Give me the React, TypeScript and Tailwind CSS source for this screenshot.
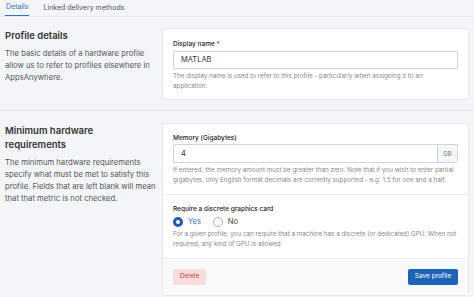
export default function App() {
  return (
    <div className="h-[297px] w-[474px] overflow-hidden bg-[#f3f5f8] font-['Inter',sans-serif] text-[#333]">
      <div className="flex h-[17px] items-end gap-[14px] border-b border-[#e4e8ee] px-[5px] text-[7px]">
        <div className="border-b-[1.5px] border-[#2f74c0] px-[1px] pb-[3px] text-[#2f74c0]">Details</div>
        <div className="pb-[3px] text-[#555]">Linked delivery methods</div>
      </div>

      <div className="flex gap-[5px] px-[5px] pt-[11px] pb-[10px]">
        <div className="w-[152px] shrink-0">
          <div className="pt-[1px] text-[9.5px] font-semibold leading-[14px] text-[#333]">Profile details</div>
          <p className="mt-[5px] text-[7.7px] leading-[12px] text-[#555]">
            The basic details of a hardware profile allow us to refer to profiles elsewhere in AppsAnywhere.
          </p>
        </div>
        <div className="h-[72px] flex-1 rounded-[3px] border border-[#e6e9ee] bg-white px-[10px] pt-[11px]">
          <div className="text-[6.5px] font-medium leading-[9px] text-[#222]">
            Display name <span className="text-[#c0392b]">*</span>
          </div>
          <div className="mt-[2px] flex h-[18px] items-center rounded-[2px] border border-[#cfd4da] px-[7px] text-[7.5px] text-[#333]">
            MATLAB
          </div>
          <p className="mt-[2px] max-w-[262px] text-[6.3px] leading-[10px] text-[#888]">
            The display name is used to refer to this profile - particularly when assigning it to an application.
          </p>
        </div>
      </div>

      <div className="h-[1px] bg-[#e3e7ed]" />

      <div className="flex gap-[5px] px-[5px] pt-[12px]">
        <div className="w-[152px] shrink-0">
          <div className="max-w-[130px] pt-[1px] text-[9.5px] font-semibold leading-[14px] text-[#333]">
            Minimum hardware requirements
          </div>
          <p className="mt-[5px] text-[7.7px] leading-[12px] text-[#555]">
            The minimum hardware requirements specify what must be met to satisfy this profile. Fields that are left blank will mean that that metric is not checked.
          </p>
        </div>
        <div className="flex-1 overflow-hidden rounded-[3px] border border-[#e6e9ee] bg-white">
          <div className="border-b border-[#eceff3] px-[10px] pt-[10px] pb-[9px]">
            <div className="text-[6.5px] font-medium leading-[9px] text-[#222]">Memory (Gigabytes)</div>
            <div className="mt-[1px] flex h-[19px] rounded-[2px] border border-[#cfd4da] text-[7.5px]">
              <div className="flex flex-1 items-center px-[7px] text-[#333]">4</div>
              <div className="flex w-[20px] items-center justify-center border-l border-[#cfd4da] bg-[#f5f6f8] text-[6px] text-[#777]">
                GB
              </div>
            </div>
            <p className="mt-[2px] text-[6.3px] leading-[10px] text-[#888]">
              If entered, the memory amount must be greater than zero. Note that if you wish to enter partial gigabytes, only English format decimals are currently supported - e.g. 1.5 for one and a half.
            </p>
          </div>
          <div className="border-b border-[#eceff3] px-[10px] pt-[10px] pb-[9px]">
            <div className="text-[6.5px] font-medium leading-[9px] text-[#222]">Require a discrete graphics card</div>
            <div className="mt-[2px] flex h-[12px] items-center text-[7.5px]">
              <span className="h-[10px] w-[10px] rounded-full border-[3px] border-[#1d5fae] bg-white" />
              <span className="ml-[5px] text-[#2f74c0]">Yes</span>
              <span className="ml-[12px] h-[10px] w-[10px] rounded-full border border-[#aab1ba] bg-white" />
              <span className="ml-[5px] text-[#444]">No</span>
            </div>
            <p className="mt-[1px] text-[6.3px] leading-[10px] text-[#888]">
              For a given profile, you can require that a machine has a discrete (or dedicated) GPU. When not required, any kind of GPU is allowed.
            </p>
          </div>
          <div className="flex items-center justify-between bg-[#f8f9fb] px-[10px] pt-[10px] pb-[10px]">
            <button className="h-[16px] w-[33px] rounded-[2px] bg-[#fbdcdc] text-[6.5px] text-[#c24a4a]">Delete</button>
            <button className="h-[16px] w-[50px] rounded-[2px] bg-[#1d64b8] text-[6.5px] text-white">Save profile</button>
          </div>
        </div>
      </div>
    </div>
  );
}
